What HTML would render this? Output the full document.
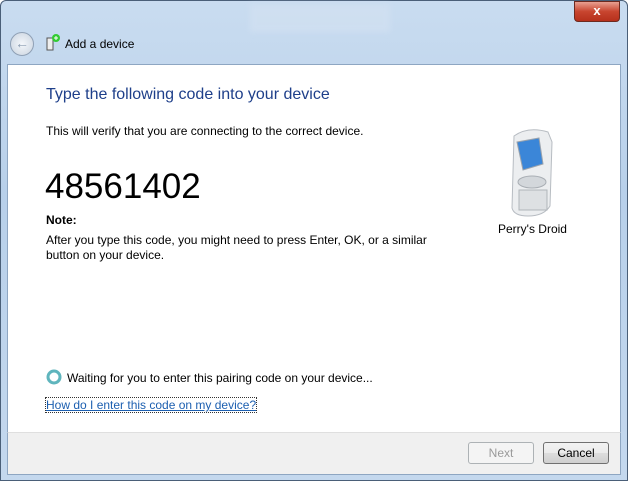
<!DOCTYPE html><html><head><style>
body{margin:0;width:628px;height:481px;overflow:hidden;font-family:"Liberation Sans",sans-serif;}
.frame{position:absolute;left:0;top:0;width:626px;height:479px;border:1px solid #4a5f78;border-radius:6px 6px 0 0;background:linear-gradient(180deg,#c9dcf0 0%,#b8d0ea 40%,#c4d8ee 100%);}
.blur{position:absolute;left:250px;top:4px;width:140px;height:28px;background:#d4e2f2;opacity:.6;filter:blur(3px);}
.close{position:absolute;left:574px;top:1px;width:44px;height:19px;border-radius:0 0 4px 4px;background:linear-gradient(#e8a091,#c8452f 50%,#b6301c);border:1px solid #6d2a20;color:#fff;font-weight:bold;font-size:13px;text-align:center;line-height:18px;}
.back{position:absolute;left:10px;top:32px;width:22px;height:22px;border-radius:50%;background:radial-gradient(#f4f7fb,#c9d3df);border:1px solid #8fa0b5;color:#8a9bb0;font-size:14px;text-align:center;line-height:21px;}
.title{position:absolute;left:65px;top:37px;font-size:12px;color:#000;}
.panel{position:absolute;left:7px;top:64px;width:612px;height:368px;background:#fff;border:1px solid #8ea6c2;border-bottom:none;}
.foot{position:absolute;left:7px;top:432px;width:612px;height:41px;background:#f0f0f0;border:1px solid #8ea6c2;border-top:1px solid #dfdfdf;}
.t{position:absolute;white-space:nowrap;font-size:12px;color:#000;}
.btn{position:absolute;top:442px;width:64px;height:20px;border:1px solid #707070;border-radius:3px;background:linear-gradient(#f2f2f2,#ebebeb 50%,#dddddd 51%,#cfcfcf);font-size:12px;text-align:center;line-height:20px;}
</style></head><body>
<div class="frame"></div>
<div class="blur"></div>
<div class="close">x</div>
<div class="back">&#8592;</div>
<svg style="position:absolute;left:45px;top:34px" width="16" height="18"><rect x="2" y="4" width="6" height="12" fill="#eee" stroke="#555"/><circle cx="11" cy="4" r="4" fill="#3c3"/><path d="M9 4h4M11 2v4" stroke="#fff"/></svg>
<div class="title">Add a device</div>
<div class="panel"></div>
<div class="foot"></div>
<div class="t" style="left:46px;top:86px;font-size:16px;color:#1e3f8a">Type the following code into your device</div>
<div class="t" style="left:46px;top:124px">This will verify that you are connecting to the correct device.</div>
<div class="t" style="left:45px;top:167px;font-size:35px">48561402</div>
<div class="t" style="left:46px;top:213px;font-weight:bold">Note:</div>
<div class="t" style="left:46px;top:233px;line-height:15px">After you type this code, you might need to press Enter, OK, or a similar<br>button on your device.</div>
<svg style="position:absolute;left:508px;top:128px" width="48" height="90"><path d="M6 8q14-10 34-4l4 10l-2 64q-6 10-22 10q-14 0-16-8z" fill="#eceef0" stroke="#b7bcc2"/><path d="M9 14l22-4l4 26l-20 6z" fill="#3b86d8" stroke="#9aa3ad"/><ellipse cx="24" cy="54" rx="14" ry="6" fill="#d3d7db" stroke="#a9aeb4"/><rect x="11" y="62" width="28" height="20" fill="#dde0e3" stroke="#b0b5ba"/></svg>
<div class="t" style="left:498px;top:222px">Perry's Droid</div>
<svg style="position:absolute;left:46px;top:369px" width="16" height="16"><circle cx="8" cy="8" r="6" fill="none" stroke="#5fb5bd" stroke-width="3"/></svg>
<div class="t" style="left:67px;top:371px">Waiting for you to enter this pairing code on your device...</div>
<div class="t" style="left:46px;top:398px;color:#1c5fb0;text-decoration:underline;outline:1px dotted #333">How do I enter this code on my device?</div>
<div class="btn" style="left:468px;color:#9a9a9a;border-color:#adb2b5;background:#f4f4f4">Next</div>
<div class="btn" style="left:543px">Cancel</div>
</body></html>
